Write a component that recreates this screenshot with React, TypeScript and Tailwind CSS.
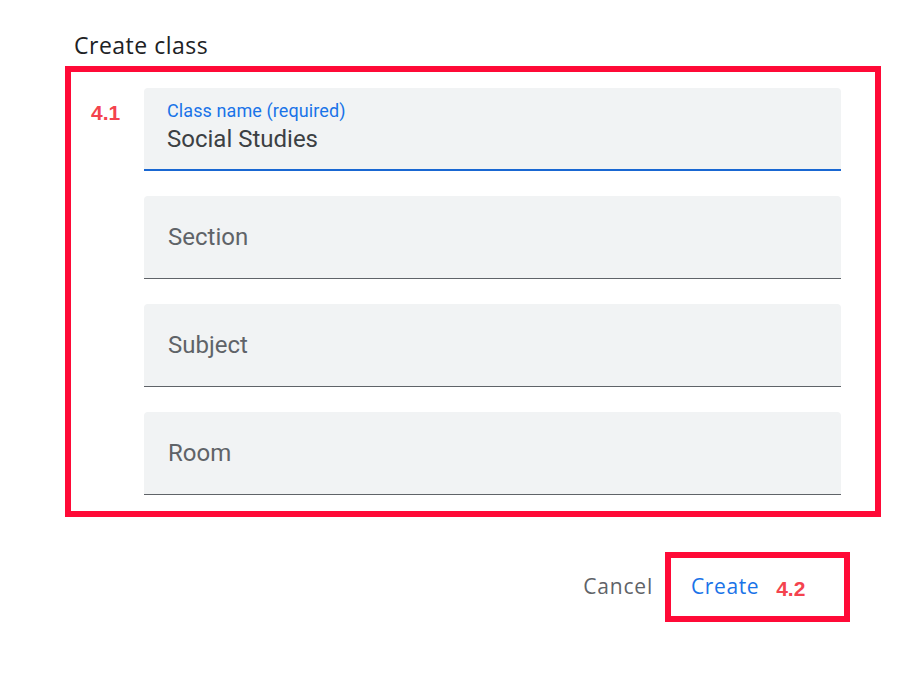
import React from "react";

const Field = ({ label }: { label: string }) => (
  <div className="h-[83px] bg-[#f1f3f4] rounded-t-[4px] border-b border-[#5f6368] flex items-center pl-[24px]">
    <span className="text-[24px] leading-[30px] text-[#5f6368]">{label}</span>
  </div>
);

const App = () => {
  const fields = ["Section", "Subject", "Room"];

  return (
    <div
      className="w-[921px] h-[676px] bg-white overflow-hidden"
      style={{ fontFamily: "Roboto, 'Liberation Sans', sans-serif" }}
    >
      {/* Title */}
      <div
        className="pt-[30px] pl-[74px] text-[23px] leading-[30px] tracking-[0.5px] text-[#202124]"
        style={{ fontFamily: "'Open Sans', Roboto, sans-serif" }}
      >
        Create class
      </div>

      {/* Annotated form */}
      <div className="ml-[65px] mt-[6px] w-[816px] border-[6px] border-[#ff0a37] flex">
        <div className="w-[73px] pl-[20px] pt-[30px]">
          <span
            className="text-[21px] font-bold text-[#f4434e] leading-none"
            style={{ fontFamily: "'Liberation Sans', Arial, sans-serif" }}
          >
            4.1
          </span>
        </div>
        <div className="w-[697px] flex flex-col gap-[25px] py-[16px]">
          <div className="h-[83px] bg-[#f1f3f4] rounded-t-[4px] border-b-[2px] border-[#1967d2] flex flex-col pl-[23px] pt-[12px]">
            <span className="text-[18px] leading-[22px] tracking-[0.1px] text-[#1a73e8]">
              Class name (required)
            </span>
            <span className="text-[24px] leading-[30px] text-[#3c4043] mt-[2px]">
              Social Studies
            </span>
          </div>
          {fields.map((f) => (
            <Field key={f} label={f} />
          ))}
        </div>
      </div>

      {/* Actions */}
      <div
        className="flex justify-end items-center mt-[35px] mr-[71px]"
        style={{ fontFamily: "'Open Sans', Roboto, sans-serif" }}
      >
        <span className="text-[21px] tracking-[0.8px] text-[#5f6368] mr-[12px]">Cancel</span>
        <div className="w-[185px] h-[70px] border-[6px] border-[#ff0a37] flex items-center pl-[20px]">
          <span className="text-[21px] tracking-[0.6px] text-[#1a73e8]">Create</span>
          <span
            className="ml-[17px] mt-[4px] text-[21px] font-bold text-[#f4434e]"
            style={{ fontFamily: "'Liberation Sans', Arial, sans-serif" }}
          >
            4.2
          </span>
        </div>
      </div>
    </div>
  );
};

export default App;
